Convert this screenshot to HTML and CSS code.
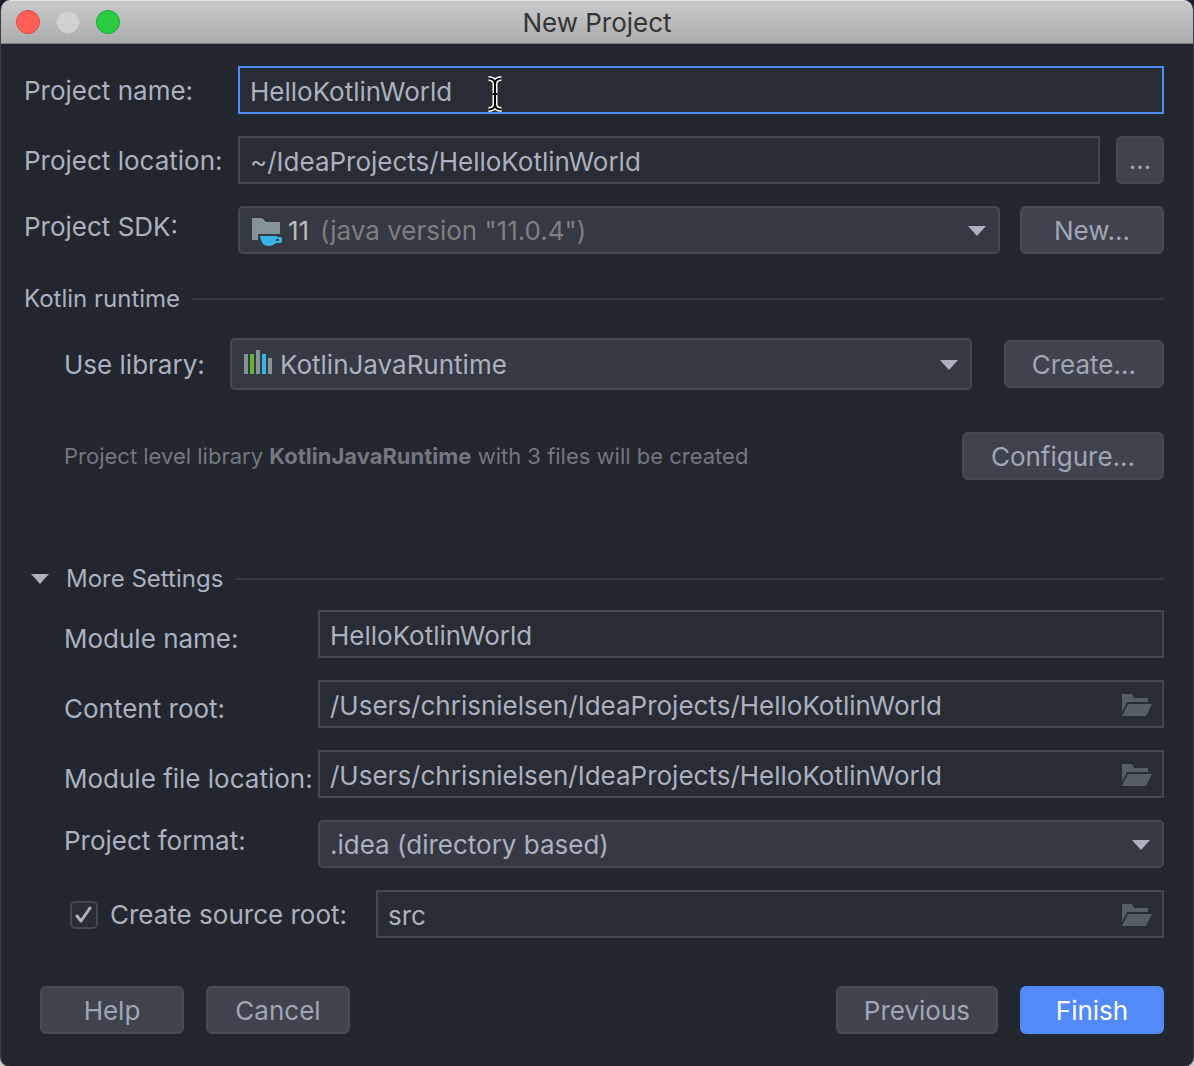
FILE: index.html
```html
<!DOCTYPE html>
<html lang="en">
<head>
    <meta charset="UTF-8">
    <meta name="viewport" content="width=device-width, initial-scale=1.0">
    <title>New Project</title>
    <link rel="stylesheet" href="styles.css">
</head>
<body>
    <!-- Shared icons -->
    <svg width="0" height="0" class="sprite" aria-hidden="true">
        <symbol id="open-folder" viewBox="0 0 30 22">
            <path d="M0 0h10l2 4h14v4H5L0 18zM6 10h24l-6 12H0z"/>
        </symbol>
    </svg>

    <form class="window">
        <header class="titlebar">
            <div class="lights">
                <button type="button" class="light close" aria-label="Close"></button>
                <button type="button" class="light minimize" aria-label="Minimize"></button>
                <button type="button" class="light maximize" aria-label="Zoom"></button>
            </div>
            <h1>New Project</h1>
        </header>

        <main class="content">
            <!-- Project -->
            <div class="row project">
                <label for="project-name">Project name:</label>
                <div class="field">
                    <input type="text" id="project-name" class="focused" value="HelloKotlinWorld">
                    <svg class="cursor" width="18" height="36" viewBox="0 0 18 36" aria-hidden="true">
                        <path class="outline" d="M2.500 2.500C6 2.500 9 4 9 8C9 4 12 2.500 15.500 2.500M9 7v22M6.500 18h5M2.500 33.500C6 33.500 9 32 9 28C9 32 12 33.500 15.500 33.500"/>
                        <path class="beam" d="M2.500 2.500C6 2.500 9 4 9 8C9 4 12 2.500 15.500 2.500M9 7v22M6.500 18h5M2.500 33.500C6 33.500 9 32 9 28C9 32 12 33.500 15.500 33.500"/>
                    </svg>
                </div>
            </div>
            <div class="row project">
                <label for="project-location">Project location:</label>
                <div class="field">
                    <input type="text" id="project-location" value="~/IdeaProjects/HelloKotlinWorld">
                </div>
                <button type="button" class="browse">...</button>
            </div>
            <div class="row project select-row sdk">
                <label for="project-sdk">Project SDK:</label>
                <div class="field dropdown with-icon">
                    <select id="project-sdk">
                        <option>11</option>
                    </select>
                    <svg class="lead" width="30" height="28" viewBox="0 0 30 28" aria-hidden="true">
                        <path fill="#87939a" d="M0 0h10l4 4h14v12H6v6H0z"/>
                        <path fill="#35b4e5" fill-rule="evenodd" d="M8 18h17v1h3q2 0 2 2v2q0 2-3 2h-3q-3 3-7 3q-8 0-9-10zM24 21v2h3v-2z"/>
                    </svg>
                    <span class="hint">(java version "11.0.4")</span>
                </div>
                <button type="button">New...</button>
            </div>

            <!-- Kotlin runtime -->
            <h2 class="section">Kotlin runtime</h2>
            <div class="row library">
                <label for="library">Use library:</label>
                <div class="field dropdown with-icon tall">
                    <select id="library">
                        <option>KotlinJavaRuntime</option>
                    </select>
                    <svg class="lead" width="28" height="28" viewBox="0 0 28 28" aria-hidden="true">
                        <path fill="#87939a" d="M0 4h4v20H0zM12 0h4v24h-4zM24 8h4v16h-4z"/>
                        <path fill="#62b52f" d="M6 4h4v20H6z"/>
                        <path fill="#35b4e5" d="M18 4h4v20h-4z"/>
                    </svg>
                </div>
                <button type="button">Create...</button>
            </div>
            <div class="row info">
                <p>Project level library <b>KotlinJavaRuntime</b> with 3 files will be created</p>
                <button type="button">Configure...</button>
            </div>

            <!-- More settings -->
            <details open>
                <summary class="section">
                    <svg width="18" height="10" viewBox="0 0 18 10" aria-hidden="true"><path d="M0 0h18L9 10z"/></svg>
                    More Settings
                </summary>
                <div class="settings">
                    <div class="row text-row">
                        <label for="module-name">Module name:</label>
                        <div class="field">
                            <input type="text" id="module-name" value="HelloKotlinWorld">
                        </div>
                    </div>
                    <div class="row text-row">
                        <label for="content-root">Content root:</label>
                        <div class="field">
                            <input type="text" id="content-root" value="/Users/chrisnielsen/IdeaProjects/HelloKotlinWorld">
                            <svg class="folder" aria-hidden="true"><use href="#open-folder"/></svg>
                        </div>
                    </div>
                    <div class="row text-row">
                        <label for="module-file">Module file location:</label>
                        <div class="field">
                            <input type="text" id="module-file" value="/Users/chrisnielsen/IdeaProjects/HelloKotlinWorld">
                            <svg class="folder" aria-hidden="true"><use href="#open-folder"/></svg>
                        </div>
                    </div>
                    <div class="row select-row">
                        <label for="format">Project format:</label>
                        <div class="field dropdown">
                            <select id="format">
                                <option>.idea (directory based)</option>
                            </select>
                        </div>
                    </div>
                    <div class="row source-root">
                        <label>
                            <span class="check">
                                <input type="checkbox" checked>
                                <svg width="18" height="18" viewBox="0 0 18 18" aria-hidden="true"><path d="M2 10l4 5L15 2"/></svg>
                            </span>
                            Create source root:
                        </label>
                        <div class="field">
                            <input type="text" aria-label="Source root" value="src">
                            <svg class="folder" aria-hidden="true"><use href="#open-folder"/></svg>
                        </div>
                    </div>
                </div>
            </details>

            <footer class="actions">
                <button type="button">Help</button>
                <button type="button">Cancel</button>
                <button type="button" class="previous">Previous</button>
                <button type="submit" class="primary">Finish</button>
            </footer>
        </main>
    </form>
</body>
</html>
```
FILE: styles.css
```css
* {
    box-sizing: border-box;
}

html {
    background: linear-gradient(#1d1b2c 50%, #c9c9cc 50%);
}

body {
    margin: 0;
    font-family: Inter, "Liberation Sans", sans-serif;
    font-size: 26px;
    line-height: 32px;
    color: #abb1bf;
}

.sprite {
    position: absolute;
}

.window {
    display: flex;
    flex-direction: column;
    min-height: 100vh;
    background-color: #22262e;
    border: 1px solid #3b3e44;
    border-top: 0;
    border-radius: 10px;
    overflow: hidden;
}

/* Title bar */
.titlebar {
    display: grid;
    grid-template-columns: 1fr auto 1fr;
    align-items: center;
    height: 44px;
    padding: 0 15px;
    background: linear-gradient(#c9cacb, #abacad);
    border-top: 1px solid #e2e2e3;
    border-bottom: 1px solid #7d7f80;
}

.titlebar h1 {
    margin: 0;
    padding-top: 2px;
    font-size: 26px;
    font-weight: 400;
    color: #343434;
}

.lights {
    display: flex;
    gap: 16px;
}

.lights .light {
    width: 24px;
    min-width: 0;
    height: 24px;
    padding: 0;
    border: 1px solid #e2463f;
    border-radius: 50%;
    background-color: #ff5f57;
}

.lights .minimize {
    border-color: #bcbcbc;
    background-color: #d1d1d1;
}

.lights .maximize {
    border-color: #14ae2c;
    background-color: #28cd41;
}

.content {
    padding: 22px 29px 32px 23px;
}

/* Rows */
.row {
    display: flex;
    align-items: center;
    margin-bottom: 22px;
}

.row label {
    flex: none;
    padding-top: 2px;
    white-space: nowrap;
}

.project label {
    width: 214px;
}

.select-row label {
    padding-top: 0;
    padding-bottom: 6px;
}

.text-row label {
    padding-top: 10px;
}

.field {
    position: relative;
    flex: 1;
    min-width: 0;
}

input[type="text"],
select {
    display: block;
    width: 100%;
    height: 48px;
    margin: 0;
    padding: 2px 10px 0;
    border: 2px solid #45484f;
    border-radius: 0;
    outline: none;
    background-color: #282c34;
    color: inherit;
    font: inherit;
}

input.focused {
    border-color: #528bf7;
}

.cursor {
    position: absolute;
    left: 248px;
    top: 10px;
    fill: none;
}

.cursor .outline {
    stroke: #ffffff;
    stroke-width: 5;
}

.cursor .beam {
    stroke: #000000;
    stroke-width: 2;
}

/* Drop-downs */
select {
    appearance: none;
    border-radius: 5px;
    background-color: #353943;
}

.dropdown::after {
    content: "";
    position: absolute;
    right: 14px;
    top: 50%;
    margin-top: -4px;
    border: 9px solid transparent;
    border-top: 10px solid #abb1bf;
    border-bottom: 0;
    pointer-events: none;
}

.with-icon select {
    padding-left: 48px;
}

.tall select {
    height: 52px;
}

.lead {
    position: absolute;
    left: 14px;
    top: 12px;
    pointer-events: none;
}

.hint {
    position: absolute;
    left: 82px;
    top: 9px;
    color: #7e7e7e;
    pointer-events: none;
}

.sdk select {
    color: #bbbbbb;
}

/* Buttons */
button {
    min-width: 144px;
    height: 48px;
    padding: 2px 26px 0;
    border: 2px solid #484b54;
    border-radius: 6px;
    background-color: #3f434d;
    color: #9fa6b4;
    font: inherit;
}

.row button {
    margin-left: 20px;
}

.row .browse {
    min-width: 48px;
    margin-left: 16px;
    padding: 0;
}

/* Section headings with a rule */
.section {
    display: flex;
    align-items: center;
    gap: 12px;
    margin: 0;
    font-size: 24px;
    font-weight: 400;
    list-style: none;
}

.section::after {
    content: "";
    flex: 1;
    height: 2px;
    background-color: #343840;
}

h2.section {
    padding: 7px 0 23px;
}

summary svg {
    margin: 0 5px 0 7px;
    fill: #afb1b3;
}

/* Kotlin runtime */
.library {
    padding-left: 40px;
    margin-bottom: 42px;
}

.library label {
    width: 166px;
}

.library button {
    min-width: 160px;
    margin-left: 32px;
}

.info {
    justify-content: space-between;
    padding-left: 40px;
    margin-bottom: 83px;
    font-size: 22px;
    color: #737780;
}

.info p {
    margin: 0;
}

.info button {
    min-width: 202px;
    font-size: 26px;
}

/* More settings */
.settings {
    padding: 15px 0 26px 40px;
}

.settings label {
    width: 254px;
}

.folder {
    position: absolute;
    right: 12px;
    top: 14px;
    width: 30px;
    height: 22px;
    fill: #555f67;
}

.settings .source-root label {
    display: flex;
    align-items: center;
    gap: 12px;
    width: 312px;
    padding-left: 6px;
}

.check {
    position: relative;
    display: flex;
}

.check input {
    appearance: none;
    width: 28px;
    height: 28px;
    margin: 0;
    border: 2px solid #414855;
    border-radius: 5px;
    background-color: #282c34;
}

.check svg {
    position: absolute;
    left: 5px;
    top: 5px;
    fill: none;
    stroke: #abb1bf;
    stroke-width: 3;
    stroke-linecap: round;
    stroke-linejoin: round;
    visibility: hidden;
}

.check input:checked + svg {
    visibility: visible;
}

/* Bottom buttons */
.actions {
    display: flex;
    gap: 22px;
    padding-left: 16px;
}

.actions .previous {
    min-width: 162px;
    margin-left: auto;
}

.actions .primary {
    border-color: #528bf7;
    background-color: #528bf7;
    color: #ffffff;
}
```
